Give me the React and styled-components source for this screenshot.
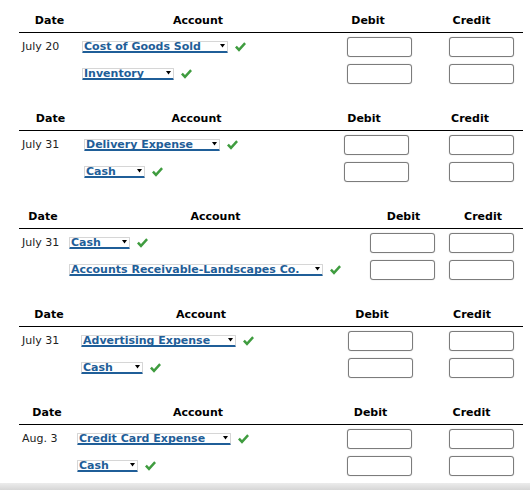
import React from "react";
import styled, { createGlobalStyle } from "styled-components";

const GlobalStyle = createGlobalStyle`
  html, body { margin: 0; padding: 0; background: #fff; }
  body { font-family: "DejaVu Sans", Verdana, sans-serif; font-size: 11px; color: #222; }
`;

const Page = styled.div`
  width: 530px;
  height: 490px;
  box-sizing: border-box;
  padding-top: 7px;
  display: flex;
  flex-direction: column;
  overflow: hidden;
`;

const Table = styled.div`
  width: 504px;
  margin-left: 19px;
  display: flex;
  flex-direction: column;
  flex: none;
  & + & { margin-top: 18px; }
`;

const HeaderRow = styled.div`
  display: grid;
  grid-template-columns: ${(p) => p.$cols};
  height: 26px;
  box-sizing: border-box;
  padding-top: 2px;
  border-bottom: 1px solid #000;
  align-items: center;
`;

const HeadCell = styled.div`
  font-weight: bold;
  color: #000;
  text-align: center;
`;

const BodyRow = styled.div`
  display: grid;
  grid-template-columns: ${(p) => p.$cols};
  height: 27px;
  align-items: center;
`;

const DateCell = styled.div`
  padding-left: 3px;
  color: #222;
  white-space: nowrap;
`;

const AccountCell = styled.div`
  display: flex;
  align-items: center;
  gap: 7px;
  padding-left: 2px;
`;

const SelectBox = styled.div`
  width: ${(p) => p.$w}px;
  height: 12px;
  box-sizing: border-box;
  display: flex;
  align-items: flex-start;
  justify-content: space-between;
  border: 1px solid #d6d6d6;
  border-bottom: 2px solid #1f5e98;
  border-radius: 1px;
  padding: 0 2px 0 1px;
  font-weight: bold;
  font-size: 11px;
  line-height: 9px;
  color: #1f5e98;
  white-space: nowrap;
  background: #fff;
`;

const Arrow = styled.svg`
  flex: none;
  margin-top: 2px;
`;

const Check = styled.svg`
  flex: none;
`;

const AmountCell = styled.div`
  display: flex;
  justify-content: flex-end;
  padding-right: ${(p) => p.$pad}px;
`;

const AmountInput = styled.input`
  width: 65px;
  height: 20px;
  box-sizing: border-box;
  border: 1px solid #7c7c7c;
  border-radius: 3px;
  box-shadow: 0 0 1px rgba(0, 0, 0, 0.35);
  background: #fff;
  padding: 0 3px;
  font-family: inherit;
  font-size: 11px;
  outline: none;
`;

const Footer = styled.div`
  margin-top: auto;
  height: 7px;
  flex: none;
  background: linear-gradient(#ececec, #d6d6d6);
`;

const entries = [
  {
    cols: [61, 236, 104, 103],
    rows: [
      { date: "July 20", account: "Cost of Goods Sold", w: 146 },
      { account: "Inventory", w: 92 },
    ],
  },
  {
    cols: [63, 229, 106, 106],
    rows: [
      { date: "July 31", account: "Delivery Expense", w: 136 },
      { account: "Cash", w: 61 },
    ],
  },
  {
    cols: [48, 297, 79, 80],
    rows: [
      { date: "July 31", account: "Cash", w: 61 },
      { account: "Accounts Receivable-Landscapes Co.", w: 254 },
    ],
  },
  {
    cols: [60, 244, 98, 102],
    rows: [
      { date: "July 31", account: "Advertising Expense", w: 155 },
      { account: "Cash", w: 62 },
    ],
  },
  {
    cols: [56, 246, 99, 103],
    rows: [
      { date: "Aug. 3", account: "Credit Card Expense", w: 154 },
      { account: "Cash", w: 61 },
    ],
  },
];

function Select({ value, w }) {
  return (
    <SelectBox $w={w}>
      <span>{value}</span>
      <Arrow width="5" height="4" viewBox="0 0 5 4">
        <polygon points="0,0 5,0 2.5,3.5" fill="#000" />
      </Arrow>
    </SelectBox>
  );
}

function CheckMark() {
  return (
    <Check width="11" height="10" viewBox="0 0 11 10">
      <polygon
        points="0,5.4 1.8,3.7 4,5.9 9.2,0.2 11,1.9 4,9.8"
        fill="#3f9c3f"
      />
    </Check>
  );
}

export default function App() {
  return (
    <>
      <GlobalStyle />
      <Page>
        {entries.map((e, i) => {
          const cols = e.cols.map((c) => `${c}px`).join(" ");
          return (
            <Table key={i}>
              <HeaderRow $cols={cols}>
                <HeadCell>Date</HeadCell>
                <HeadCell>Account</HeadCell>
                <HeadCell>Debit</HeadCell>
                <HeadCell>Credit</HeadCell>
              </HeaderRow>
              {e.rows.map((r, j) => (
                <BodyRow $cols={cols} key={j}>
                  <DateCell>{r.date || ""}</DateCell>
                  <AccountCell>
                    <Select value={r.account} w={r.w} />
                    <CheckMark />
                  </AccountCell>
                  <AmountCell $pad={8}>
                    <AmountInput type="text" />
                  </AmountCell>
                  <AmountCell $pad={9}>
                    <AmountInput type="text" />
                  </AmountCell>
                </BodyRow>
              ))}
            </Table>
          );
        })}
        <Footer />
      </Page>
    </>
  );
}
